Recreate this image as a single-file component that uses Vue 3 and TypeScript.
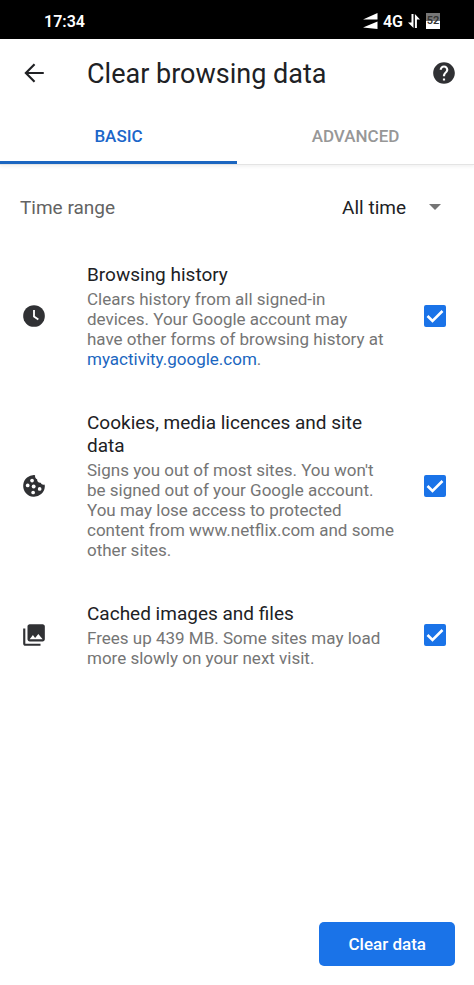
<script setup lang="ts">
import { ref } from 'vue'

interface DataOption {
  id: string
  icon: 'history' | 'cookie' | 'images'
  title: string
  lines: string[]
  link?: string
  checked: boolean
}

const tabs = ['BASIC', 'ADVANCED']
const activeTab = ref('BASIC')
const ranges = ['Last hour', 'Last 24 hours', 'Last 7 days', 'Last 4 weeks', 'All time']
const range = ref('All time')

const options = ref<DataOption[]>([
  {
    id: 'history',
    icon: 'history',
    title: 'Browsing history',
    lines: [
      'Clears history from all signed-in',
      'devices. Your Google account may',
      'have other forms of browsing history at',
      '',
    ],
    link: 'myactivity.google.com',
    checked: true,
  },
  {
    id: 'cookies',
    icon: 'cookie',
    title: 'Cookies, media licences and site data',
    lines: [
      "Signs you out of most sites. You won't",
      'be signed out of your Google account.',
      'You may lose access to protected',
      'content from www.netflix.com and some',
      'other sites.',
    ],
    checked: true,
  },
  {
    id: 'cache',
    icon: 'images',
    title: 'Cached images and files',
    lines: ['Frees up 439 MB. Some sites may load', 'more slowly on your next visit.'],
    checked: true,
  },
])
</script>

<template>
  <div class="screen">
    <div class="status">
      <span class="clock">17:34</span>
      <div class="signals">
        <svg class="signal" viewBox="0 0 16 18" aria-hidden="true">
          <path d="M15.500 1v6.500H1zM15.500 9.500V17L1 15.500z" fill="#fff" />
        </svg>
        <span class="network">4G</span>
        <svg class="arrows" viewBox="0 0 12 14" aria-hidden="true">
          <path d="M3.500 0h2v14L0 8.500h3.500zM6.900 14V0L12 5.500H8.900V14z" fill="#fff" />
        </svg>
        <span class="battery">52</span>
      </div>
    </div>

    <header class="bar">
      <button class="icon-button" aria-label="Back">
        <svg class="icon" viewBox="0 0 24 24" aria-hidden="true">
          <path d="M12.500 4L4.500 12l8 8M4.500 12H21" fill="none" stroke="#202124" stroke-width="2" />
        </svg>
      </button>
      <h1>Clear browsing data</h1>
      <button class="icon-button" aria-label="Help">
        <svg class="icon" viewBox="0 0 24 24" aria-hidden="true">
          <path
            d="M12 2C6.480 2 2 6.480 2 12s4.480 10 10 10 10-4.480 10-10S17.520 2 12 2zm1 17h-2v-2h2v2zm2.070-7.750l-.9.920C13.450 12.900 13 13.500 13 15h-2v-.5c0-1.100.45-2.100 1.170-2.830l1.240-1.260c.37-.36.59-.86.59-1.410 0-1.100-.9-2-2-2s-2 .9-2 2H8c0-2.210 1.790-4 4-4s4 1.790 4 4c0 .88-.36 1.680-.93 2.250z"
            fill="#303134"
          />
        </svg>
      </button>
    </header>

    <nav class="tabs" role="tablist">
      <button
        v-for="tab in tabs"
        :key="tab"
        role="tab"
        class="tab"
        :class="{ active: tab === activeTab }"
        :aria-selected="tab === activeTab"
        @click="activeTab = tab"
      >
        {{ tab }}
      </button>
    </nav>

    <main class="content">
      <div class="range">
        <label for="range">Time range</label>
        <div class="picker">
          <select id="range" v-model="range">
            <option v-for="r in ranges" :key="r">{{ r }}</option>
          </select>
          <svg class="caret" viewBox="0 0 12 6" aria-hidden="true">
            <path d="M0 0h12L6 6z" fill="#757575" />
          </svg>
        </div>
      </div>

      <ul class="options">
        <li v-for="option in options" :key="option.id" class="option">
          <svg v-if="option.icon === 'history'" class="icon" viewBox="0 0 24 24" aria-hidden="true">
            <circle cx="12" cy="12" r="10" fill="#303134" />
            <path d="M12 6.500v6l4 2.800" fill="none" stroke="#fff" stroke-width="1.700" />
          </svg>
          <svg v-else-if="option.icon === 'cookie'" class="icon" viewBox="0 0 24 24" aria-hidden="true">
            <path
              d="M13 2A10 10 0 1 0 22 12.500L21.800 10.600C20.300 11.200 18.700 10.400 18.200 9C16.200 9.300 14.600 7.700 14.900 5.800C13.500 5.200 12.700 3.700 13 2z"
              fill="#303134"
            />
            <g fill="#fff">
              <circle cx="10.200" cy="7" r="1.700" />
              <circle cx="6.200" cy="11.500" r="1.700" />
              <circle cx="11.700" cy="12.500" r="1.800" />
              <circle cx="17.200" cy="14.700" r="1.700" />
              <circle cx="11.200" cy="18" r="1.700" />
            </g>
          </svg>
          <svg v-else class="icon" viewBox="0 0 24 24" aria-hidden="true">
            <path
              d="M22 16V4c0-1.100-.9-2-2-2H8c-1.100 0-2 .9-2 2v12c0 1.100.9 2 2 2h12c1.100 0 2-.9 2-2zm-11-4l2.030 2.710L16 11l4 5H8l3-4zM2 6v14c0 1.100.9 2 2 2h14v-2H4V6H2z"
              fill="#303134"
            />
          </svg>
          <div class="copy">
            <label class="name" :for="option.id">{{ option.title }}</label>
            <p>{{ option.lines.join('\n') }}<template v-if="option.link"><a href="https://myactivity.google.com">{{ option.link }}</a>.</template></p>
          </div>
          <span class="check">
            <input :id="option.id" v-model="option.checked" type="checkbox" />
            <svg v-if="option.checked" viewBox="0 0 22 22" aria-hidden="true">
              <path d="M3.500 11l5 5L18.500 6" fill="none" stroke="#fff" stroke-width="2.600" />
            </svg>
          </span>
        </li>
      </ul>
    </main>

    <footer class="actions">
      <button class="clear">Clear data</button>
    </footer>
  </div>
</template>

<style>
body {
  background: #fff;
}
</style>

<style scoped>
.screen {
  display: flex;
  flex-direction: column;
  min-height: 100vh;
  font-family: Roboto, "Liberation Sans", sans-serif;
  color: #202124;
  background: #fff;
}

button {
  padding: 0;
  border: 0;
  background: none;
  font-family: inherit;
}

svg {
  display: block;
}

.status {
  display: flex;
  justify-content: space-between;
  align-items: center;
  height: 39px;
  padding: 3px 34px 0 44px;
  box-sizing: border-box;
  background: #000;
  color: #fff;
  font-size: 16px;
  font-weight: 600;
}

.signals {
  display: flex;
  align-items: center;
}

.signal {
  width: 16px;
  height: 18px;
}

.network {
  margin: 0 5px;
}

.arrows {
  width: 12px;
  height: 14px;
}

.battery {
  width: 14px;
  height: 16px;
  margin-left: 6px;
  background: linear-gradient(#777 50%, #fff 50%);
  color: #333;
  font-size: 11px;
  line-height: 16px;
  text-align: center;
}

.bar {
  display: flex;
  align-items: center;
  height: 68px;
  padding: 0 17px 0 21px;
}

.icon-button {
  cursor: pointer;
}

.icon {
  flex: none;
  width: 26px;
  height: 26px;
}

h1 {
  flex: 1;
  margin: 0 0 0 40px;
  padding-top: 2px;
  font-size: 27px;
  font-weight: 400;
}

.tabs {
  display: flex;
  border-bottom: 1px solid #e4e4e4;
  box-shadow: 0 2px 3px rgba(0, 0, 0, 0.05);
}

.tab {
  flex: 1;
  height: 57px;
  border-top: 3px solid transparent;
  border-bottom: 3px solid transparent;
  color: #979797;
  font-size: 17px;
  font-weight: 500;
}

.tab.active {
  border-bottom-color: #1b66c0;
  color: #1b66c9;
}

.content {
  flex: 1;
}

.range {
  display: flex;
  justify-content: space-between;
  align-items: center;
  height: 84px;
  padding: 0 33px 0 20px;
  font-size: 19px;
}

.range label {
  color: #636363;
}

.picker {
  display: flex;
  align-items: center;
  gap: 23px;
}

select {
  appearance: none;
  padding: 0;
  border: 0;
  background: none;
  color: #202124;
  font-family: inherit;
  font-size: 19px;
  text-align: right;
  text-align-last: right;
}

.caret {
  width: 12px;
  height: 6px;
}

.options {
  display: flex;
  flex-direction: column;
  gap: 42px;
  margin: 0;
  padding: 14px 28px 0 21px;
  list-style: none;
}

.option {
  display: flex;
  align-items: center;
}

.copy {
  flex: 1;
  margin: 0 26px 0 40px;
}

.name {
  display: block;
  margin-bottom: 3px;
  font-size: 19px;
  line-height: 23px;
}

.copy p {
  margin: 0;
  color: #757575;
  font-size: 17px;
  line-height: 20px;
  white-space: pre-line;
}

a {
  color: #1b66c0;
  text-decoration: none;
}

.check {
  display: grid;
  width: 22px;
  height: 22px;
}

.check input,
.check svg {
  grid-area: 1 / 1;
  width: 22px;
  height: 22px;
  margin: 0;
}

.check input {
  appearance: none;
  border: 2px solid #757575;
  border-radius: 2px;
}

.check input:checked {
  border-color: #1a73e8;
  background: #1a73e8;
}

.check svg {
  pointer-events: none;
}

.actions {
  display: flex;
  justify-content: flex-end;
  padding: 19px;
}

.clear {
  height: 44px;
  padding: 0 29px;
  border-radius: 5px;
  background: #1a73e8;
  color: #fff;
  font-size: 17px;
  font-weight: 500;
}
</style>
